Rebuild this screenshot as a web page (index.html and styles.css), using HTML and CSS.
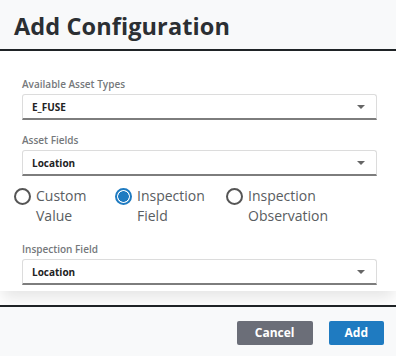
FILE: index.html
```html
<!DOCTYPE html>
<html>
<head>
<meta charset="utf-8">
<link rel="stylesheet" href="styles.css">
</head>
<body>
<div class="modal">
  <header class="modal-header">
    <h1 class="title">Add Configuration</h1>
  </header>
  <section class="modal-body">
    <div class="form">
      <div class="field">
        <label class="field-label">Available Asset Types</label>
        <div class="select"><span class="select-value">E_FUSE</span><span class="caret"></span></div>
      </div>
      <div class="field">
        <label class="field-label">Asset Fields</label>
        <div class="select"><span class="select-value">Location</span><span class="caret"></span></div>
      </div>
      <div class="radios">
        <div class="radio radio-a"><span class="circle"></span><span class="radio-text">Custom Value</span></div>
        <div class="radio radio-b"><span class="circle checked"></span><span class="radio-text">Inspection Field</span></div>
        <div class="radio"><span class="circle"></span><span class="radio-text">Inspection Observation</span></div>
      </div>
      <div class="field last">
        <label class="field-label">Inspection Field</label>
        <div class="select"><span class="select-value">Location</span><span class="caret"></span></div>
      </div>
    </div>
  </section>
  <footer class="modal-footer">
    <button class="btn btn-cancel">Cancel</button>
    <button class="btn btn-add">Add</button>
  </footer>
</div>
</body>
</html>
```
FILE: styles.css
```css
* { box-sizing: border-box; }
html, body { margin: 0; padding: 0; background: #fff; }
body { font-family: "Open Sans", "Noto Sans", sans-serif; width: 396px; height: 356px; overflow: hidden; }
.modal { display: flex; flex-direction: column; height: 356px; }
.modal-header {
  height: 51px;
  background: #f8f9fa;
  border-bottom: 2px solid #1f2326;
  display: flex;
  align-items: center;
  padding: 3px 0 0 14px;
}
.title { margin: 0; font-size: 23.5px; line-height: 30px; font-weight: 700; color: #2b2f33; letter-spacing: 0.1px; }
.modal-body { height: 254px; background: #fff; overflow: hidden; }
.form {
  padding: 26px 19px 6px 22px;
  box-shadow: 0 9px 14px -2px rgba(0,0,0,0.1);
}
.field { margin-bottom: 13px; }
.field.last { margin-bottom: 0; }
.field-label {
  display: block;
  font-size: 10px;
  font-weight: 600;
  color: #75787b;
  line-height: 14px;
  margin-bottom: 3px;
}
.select {
  height: 26px;
  border: 1px solid #dcdcdc;
  border-bottom: 2px solid #7d7d7d;
  border-radius: 3px 3px 0 0;
  display: flex;
  align-items: center;
  justify-content: space-between;
  padding: 0 11px 0 9px;
  background: #fff;
}
.select-value { font-size: 10px; font-weight: 700; color: #222; }
.caret {
  width: 0; height: 0;
  border-left: 4px solid transparent;
  border-right: 4px solid transparent;
  border-top: 4px solid #666;
}
.radios {
  display: flex;
  margin: -3px 0 16px -8px;
}
.radio { display: flex; align-items: flex-start; }
.radio-a { width: 101px; }
.radio-b { width: 111px; }
.circle {
  flex: none;
  width: 17px; height: 17px;
  border: 2px solid #555;
  border-radius: 50%;
  margin-top: 2px;
  margin-right: 5px;
  background: #fff;
}
.circle.checked {
  border-color: #1f7bc1;
  background: radial-gradient(circle, #1f7bc1 0 5px, #fff 5.6px);
}
.radio-text {
  width: min-content;
  font-size: 14px;
  line-height: 20px;
  color: #595d61;
}
.modal-footer {
  flex: 1;
  background: #f8f9fa;
  border-top: 2px solid #1f2326;
  display: flex;
  align-items: center;
  justify-content: flex-end;
  padding: 2px 12px 0 0;
  gap: 16px;
}
.btn {
  height: 24px;
  border: none;
  border-radius: 2px;
  padding: 0 18px;
  font-family: "Open Sans", sans-serif;
  font-size: 12px;
  font-weight: 700;
  color: #fff;
}
.btn-cancel { background: #6b6e78; }
.btn-add { background: #1f7bc1; padding: 0 16px; }
```
